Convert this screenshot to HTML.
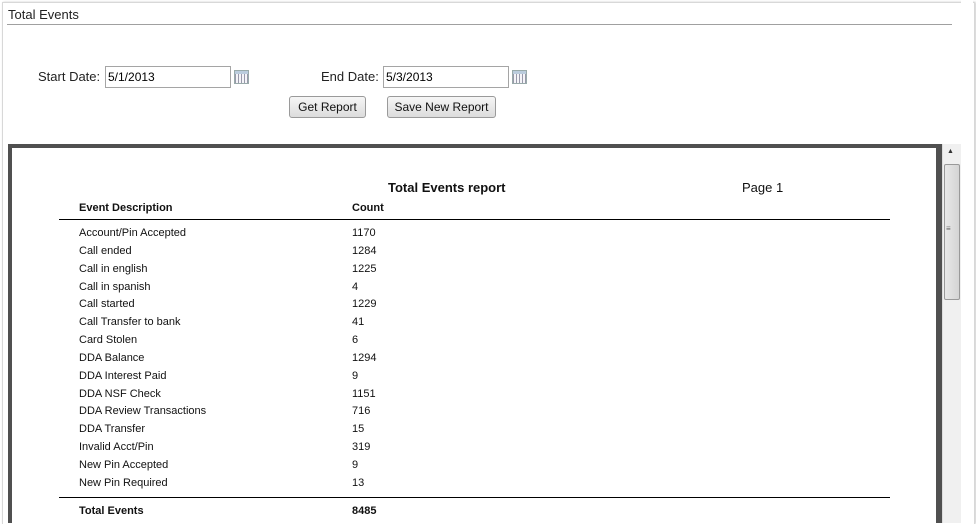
<!DOCTYPE html>
<html><head><style>
body{margin:0;width:976px;height:523px;overflow:hidden;background:#fff;font-family:"Liberation Sans",Arial,sans-serif;position:relative}
.a{position:absolute;white-space:nowrap}
.frame{position:absolute;left:2px;top:2px;width:971px;height:521px;border:1px solid #d8d8d8;border-bottom:none;box-shadow:1px 0 2px #ccc}
.inp{position:absolute;height:22px;border:1px solid #a5a5a5;font-size:12px;line-height:20px;padding-left:2px;box-sizing:border-box}
.btn{position:absolute;height:22px;border:1px solid #9a9a9a;border-radius:3px;background:linear-gradient(#f6f6f6,#dcdcdc);font-size:12px;line-height:20px;text-align:center;box-sizing:border-box;color:#111}
.cal{position:absolute;width:15px;height:14px;border:1px solid #9aa;background:linear-gradient(#bcd 0 3px,transparent 3px),repeating-linear-gradient(90deg,#99a 0 1px,#f4f4f8 1px 3px),#eef;box-sizing:border-box}
.r{font-size:11px;color:#111}
</style></head><body>
<div class="frame"></div>
<div class="a" style="left:8px;top:7px;font-size:13px;color:#222">Total Events</div>
<div class="a" style="left:7px;top:24px;width:945px;height:1px;background:#a0a0a0"></div>
<div class="a" style="left:38px;top:69px;font-size:13px;color:#222">Start Date:</div>
<div class="inp" style="left:105px;top:66px;width:126px">5/1/2013</div>
<div class="cal" style="left:234px;top:70px"></div>
<div class="a" style="left:321px;top:69px;font-size:13px;color:#222">End Date:</div>
<div class="inp" style="left:383px;top:66px;width:126px">5/3/2013</div>
<div class="cal" style="left:512px;top:70px"></div>
<div class="btn" style="left:289px;top:96px;width:77px">Get Report</div>
<div class="btn" style="left:387px;top:96px;width:109px">Save New Report</div>
<div class="a" style="left:8px;top:144px;width:934px;height:379px;background:#505050"></div>
<div class="a" style="left:12px;top:148px;width:924px;height:375px;background:#fff"></div>
<div class="a" style="left:942px;top:144px;width:19px;height:379px;background:#f0f0f0;border-left:1px solid #ddd"></div>
<div class="a" style="left:944px;top:164px;width:14px;height:134px;border:1px solid #999;border-radius:2px;background:linear-gradient(90deg,#e8e8e8,#d4d4d4)"></div>
<div class="a" style="left:946px;top:224px;font-size:8px;color:#666">≡</div>
<div class="a" style="left:947px;top:148px;font-size:7px;color:#333">▲</div>
<div class="a" style="left:961px;top:0;width:12px;height:523px;background:#fff"></div>
<div class="a" style="left:388px;top:180px;font-size:13px;font-weight:bold;color:#111">Total Events report</div>
<div class="a" style="left:742px;top:180px;font-size:13px;color:#111">Page 1</div>
<div class="a r" style="left:79px;top:202px;font-weight:bold">Event Description</div>
<div class="a r" style="left:352px;top:202px;font-weight:bold">Count</div>
<div class="a" style="left:59px;top:219px;width:831px;height:1px;background:#000"></div>
<div class="a r" style="left:79px;top:225px;line-height:17.85px">Account/Pin Accepted<br>Call ended<br>Call in english<br>Call in spanish<br>Call started<br>Call Transfer to bank<br>Card Stolen<br>DDA Balance<br>DDA Interest Paid<br>DDA NSF Check<br>DDA Review Transactions<br>DDA Transfer<br>Invalid Acct/Pin<br>New Pin Accepted<br>New Pin Required</div>
<div class="a r" style="left:352px;top:225px;line-height:17.85px">1170<br>1284<br>1225<br>4<br>1229<br>41<br>6<br>1294<br>9<br>1151<br>716<br>15<br>319<br>9<br>13</div>
<div class="a" style="left:59px;top:497px;width:831px;height:1px;background:#000"></div>
<div class="a r" style="left:79px;top:505px;font-weight:bold">Total Events</div>
<div class="a r" style="left:352px;top:505px;font-weight:bold">8485</div>
</body></html>
